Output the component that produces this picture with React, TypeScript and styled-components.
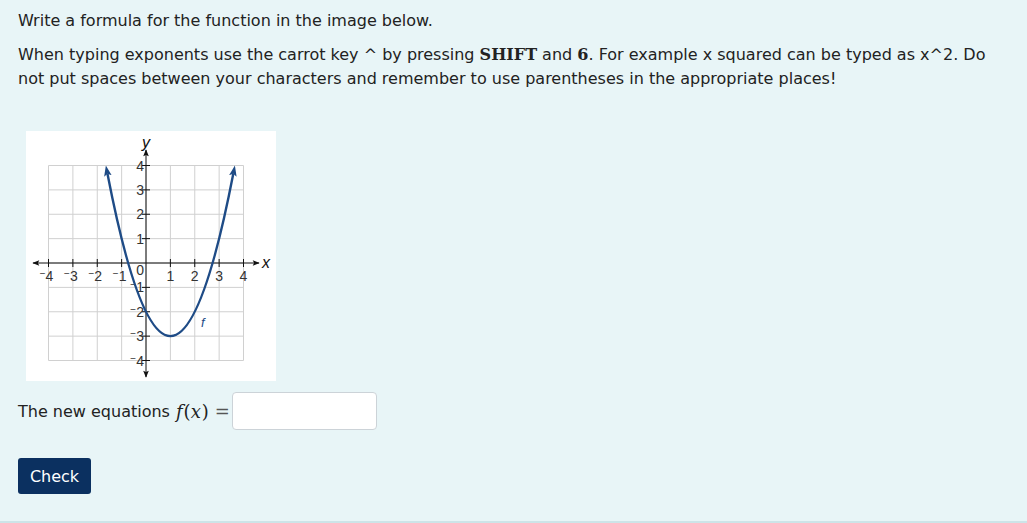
import React from "react";
import styled, { createGlobalStyle } from "styled-components";

const GlobalStyle = createGlobalStyle`
  html, body {
    margin: 0;
    padding: 0;
    background: #e8f5f7;
  }
`;

const Page = styled.div`
  box-sizing: border-box;
  height: 523px;
  padding: 9px 30px 0 18px;
  background: #e8f5f7;
  border-bottom: 2px solid #cde4e8;
  font-family: "DejaVu Sans", Verdana, sans-serif;
  font-size: 16px;
  color: #222;
  overflow: hidden;
`;

const Para = styled.p<{ $gap?: number }>`
  margin: 0 0 ${(p) => p.$gap ?? 0}px 0;
  line-height: 24px;
`;

const Strong = styled.b`
  font-family: "DejaVu Serif", "Liberation Serif", serif;
  font-weight: bold;
`;

const GraphBox = styled.div`
  width: 250px;
  height: 250px;
  margin: 40px 0 0 8px;
  background: #fff;
`;

const AxisLabel = styled.text<{ $size?: number; $italic?: boolean; $color?: string }>`
  font-family: "Liberation Sans", Arial, sans-serif;
  font-size: ${(p) => p.$size ?? 14}px;
  font-style: ${(p) => (p.$italic ? "italic" : "normal")};
  fill: ${(p) => p.$color ?? "#333"};
`;

const AnswerRow = styled.div`
  display: flex;
  align-items: center;
  margin-top: 11px;
  height: 38px;
`;

const MathText = styled.span`
  font-family: "DejaVu Serif", "Liberation Serif", serif;
  font-size: 18px;
  margin-left: 6px;
  color: #222;
  i {
    font-style: italic;
    margin-right: 1px;
  }
`;

const Eq = styled.span`
  margin: 0 2px 0 6px;
  color: #555;
`;

const AnswerInput = styled.input`
  box-sizing: border-box;
  width: 145px;
  height: 38px;
  border: 1px solid #ccd3d8;
  border-radius: 4px;
  background: #fff;
  outline: none;
`;

const CheckButton = styled.button`
  margin-top: 28px;
  width: 73px;
  height: 36px;
  border: none;
  border-radius: 3px;
  background: #0b3060;
  color: #fff;
  font-family: "DejaVu Sans", Verdana, sans-serif;
  font-size: 16px;
  padding: 0;
`;

const U = 24.375;
const OX = 120;
const OY = 132;
const px = (x: number) => OX + x * U;
const py = (y: number) => OY - y * U;

const units = [-4, -3, -2, -1, 0, 1, 2, 3, 4];

const Num: React.FC<{ n: number }> = ({ n }) =>
  n < 0 ? (
    <>
      <tspan fontSize="10" dy="-4">−</tspan>
      <tspan dy="4">{-n}</tspan>
    </>
  ) : (
    <>{n}</>
  );

const Graph: React.FC = () => {
  // f(x) = (x-1)^2 - 3, drawn up to just below y = 4 so the arrow tips reach it
  const e = Math.sqrt(7) - 0.065;
  const x0 = px(1 - e);
  const x1 = px(1 + e);
  const yTop = e * e - 3;
  const yEnd = py(yTop);
  const cy = yTop - 2 * e * e;
  return (
    <svg width="250" height="250" viewBox="0 0 250 250">
      <defs>
        <marker id="ah" viewBox="0 0 14 10" refX="3" refY="5" markerWidth="4.5" markerHeight="3.2" orient="auto-start-reverse">
          <path d="M0 0 L14 5 L0 10 L3 5 Z" fill="#1e4b86" />
        </marker>
        <marker id="ax" viewBox="0 0 10 10" refX="9" refY="5" markerWidth="9" markerHeight="7" markerUnits="userSpaceOnUse" orient="auto-start-reverse">
          <path d="M0 1 L10 5 L0 9 L2 5 Z" fill="#111" />
        </marker>
      </defs>
      {units.map((u) => (
        <line key={"v" + u} x1={px(u)} y1={py(4)} x2={px(u)} y2={py(-4)} stroke="#d0d0d0" strokeWidth="1" />
      ))}
      {units.map((u) => (
        <line key={"h" + u} x1={px(-4)} y1={py(u)} x2={px(4)} y2={py(u)} stroke="#d0d0d0" strokeWidth="1" />
      ))}
      <line x1="7" y1={OY} x2="233" y2={OY} stroke="#111" strokeWidth="1" markerStart="url(#ax)" markerEnd="url(#ax)" />
      <line x1={OX} y1="19" x2={OX} y2="246" stroke="#111" strokeWidth="1" markerStart="url(#ax)" markerEnd="url(#ax)" />
      {units
        .filter((u) => u !== 0)
        .map((u) => (
          <g key={"t" + u}>
            <line x1={px(u)} y1={OY - 4} x2={px(u)} y2={OY + 4} stroke="#111" strokeWidth="1" />
            <line x1={OX - 4} y1={py(u)} x2={OX + 4} y2={py(u)} stroke="#111" strokeWidth="1" />
          </g>
        ))}
      {units
        .filter((u) => u !== 0)
        .map((u) => (
          <AxisLabel key={"xl" + u} x={px(u) + (u < 0 ? -2 : 0)} y={OY + 18} textAnchor="middle">
            <Num n={u} />
          </AxisLabel>
        ))}
      {units
        .filter((u) => u !== 0)
        .map((u) => (
          <AxisLabel key={"yl" + u} x={OX - 2} y={py(u) + 5} textAnchor="end">
            <Num n={u} />
          </AxisLabel>
        ))}
      <AxisLabel x={OX - 2} y={OY + 12} textAnchor="end">0</AxisLabel>
      <AxisLabel x="236" y={OY + 5} $size={16} $italic $color="#111">x</AxisLabel>
      <AxisLabel x={OX - 4} y="17" $size={16} $italic $color="#111">y</AxisLabel>
      <AxisLabel x="175" y="196" $size={13} $italic $color="#1e4b86">f</AxisLabel>
      <path
        d={`M${x0} ${yEnd} Q${px(1)} ${py(cy)} ${x1} ${yEnd}`}
        fill="none"
        stroke="#1e4b86"
        strokeWidth="2.4"
        markerStart="url(#ah)"
        markerEnd="url(#ah)"
      />
    </svg>
  );
};

const App: React.FC = () => {
  return (
    <>
      <GlobalStyle />
      <Page>
        <Para $gap={10}>Write a formula for the function in the image below.</Para>
        <Para>
          When typing exponents use the carrot key ^ by pressing <Strong>SHIFT</Strong> and <Strong>6</Strong>. For example x
          squared can be typed as x^2. Do not put spaces between your characters and remember to use parentheses in the
          appropriate places!
        </Para>
        <GraphBox>
          <Graph />
        </GraphBox>
        <AnswerRow>
          <span>The new equations</span>
          <MathText>
            <i>f</i>(<i>x</i>)<Eq>=</Eq>
          </MathText>
          <AnswerInput type="text" />
        </AnswerRow>
        <CheckButton>Check</CheckButton>
      </Page>
    </>
  );
};

export default App;
